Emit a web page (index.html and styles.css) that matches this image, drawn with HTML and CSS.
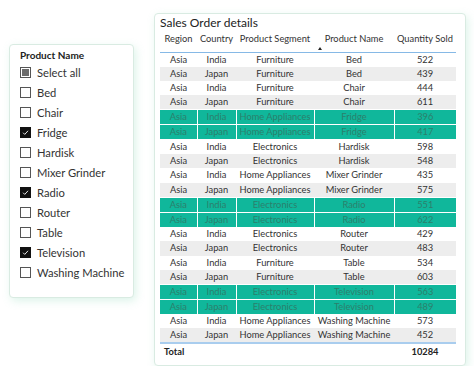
FILE: index.html
```html
<!DOCTYPE html>
<html>
<head>
<meta charset="utf-8">
<link rel="stylesheet" href="styles.css">
</head>
<body>
<div class="page">
  <div class="slicer">
    <div class="slicer-title">Product Name</div>
    <ul class="items">
      <li><span class="box partial"><span class="inner"></span></span>Select all</li>
      <li><span class="box"></span>Bed</li>
      <li><span class="box"></span>Chair</li>
      <li><span class="box checked"><svg viewBox="0 0 11 11" width="11" height="11"><path d="M2.6 5.8 L4.6 7.8 L8.6 3.4" fill="none" stroke="#fff" stroke-width="1.1"/></svg></span>Fridge</li>
      <li><span class="box"></span>Hardisk</li>
      <li><span class="box"></span>Mixer Grinder</li>
      <li><span class="box checked"><svg viewBox="0 0 11 11" width="11" height="11"><path d="M2.6 5.8 L4.6 7.8 L8.6 3.4" fill="none" stroke="#fff" stroke-width="1.1"/></svg></span>Radio</li>
      <li><span class="box"></span>Router</li>
      <li><span class="box"></span>Table</li>
      <li><span class="box checked"><svg viewBox="0 0 11 11" width="11" height="11"><path d="M2.6 5.8 L4.6 7.8 L8.6 3.4" fill="none" stroke="#fff" stroke-width="1.1"/></svg></span>Television</li>
      <li><span class="box"></span>Washing Machine</li>
    </ul>
  </div>

  <div class="card">
    <div class="card-title">Sales Order details</div>
    <table class="grid">
      <colgroup>
        <col class="c1"><col class="c2"><col class="c3"><col class="c4"><col class="c5">
      </colgroup>
      <thead>
        <tr>
          <th>Region</th><th>Country</th><th>Product Segment</th><th class="sorted">Product Name<span class="arrow"></span></th><th>Quantity Sold</th>
        </tr>
      </thead>
      <tbody>
        <tr><td>Asia</td><td>India</td><td>Furniture</td><td>Bed</td><td>522</td></tr>
        <tr class="alt"><td>Asia</td><td>Japan</td><td>Furniture</td><td>Bed</td><td>439</td></tr>
        <tr><td>Asia</td><td>India</td><td>Furniture</td><td>Chair</td><td>444</td></tr>
        <tr class="alt"><td>Asia</td><td>Japan</td><td>Furniture</td><td>Chair</td><td>611</td></tr>
        <tr class="sel"><td>Asia</td><td>India</td><td>Home Appliances</td><td>Fridge</td><td>396</td></tr>
        <tr class="sel"><td>Asia</td><td>Japan</td><td>Home Appliances</td><td>Fridge</td><td>417</td></tr>
        <tr><td>Asia</td><td>India</td><td>Electronics</td><td>Hardisk</td><td>598</td></tr>
        <tr class="alt"><td>Asia</td><td>Japan</td><td>Electronics</td><td>Hardisk</td><td>548</td></tr>
        <tr><td>Asia</td><td>India</td><td>Home Appliances</td><td>Mixer Grinder</td><td>435</td></tr>
        <tr class="alt"><td>Asia</td><td>Japan</td><td>Home Appliances</td><td>Mixer Grinder</td><td>575</td></tr>
        <tr class="sel"><td>Asia</td><td>India</td><td>Electronics</td><td>Radio</td><td>551</td></tr>
        <tr class="sel"><td>Asia</td><td>Japan</td><td>Electronics</td><td>Radio</td><td>622</td></tr>
        <tr><td>Asia</td><td>India</td><td>Electronics</td><td>Router</td><td>429</td></tr>
        <tr class="alt"><td>Asia</td><td>Japan</td><td>Electronics</td><td>Router</td><td>483</td></tr>
        <tr><td>Asia</td><td>India</td><td>Furniture</td><td>Table</td><td>534</td></tr>
        <tr class="alt"><td>Asia</td><td>Japan</td><td>Furniture</td><td>Table</td><td>603</td></tr>
        <tr class="sel"><td>Asia</td><td>India</td><td>Electronics</td><td>Television</td><td>563</td></tr>
        <tr class="sel"><td>Asia</td><td>Japan</td><td>Electronics</td><td>Television</td><td>489</td></tr>
        <tr><td>Asia</td><td>India</td><td>Home Appliances</td><td>Washing Machine</td><td>573</td></tr>
        <tr class="alt"><td>Asia</td><td>Japan</td><td>Home Appliances</td><td>Washing Machine</td><td>452</td></tr>
      </tbody>
      <tfoot>
        <tr><td class="total-label">Total</td><td></td><td></td><td></td><td>10284</td></tr>
      </tfoot>
    </table>
  </div>
</div>
</body>
</html>
```
FILE: styles.css
```css
* { box-sizing: border-box; }
html, body { margin: 0; padding: 0; background: #fff; }
body { font-family: "Lato", "Open Sans", sans-serif; color: #333; }

.page {
  display: flex;
  align-items: flex-start;
  padding: 13px 0 0 9px;
  gap: 20px;
}

.slicer {
  margin-top: 31px;
  width: 125px;
  height: 254px;
  background: #fff;
  border: 1px solid #d9ebe2;
  border-radius: 4px;
  box-shadow: 2px 3px 8px rgba(120, 210, 170, 0.25);
  padding: 3px 0 0 10px;
}
.slicer-title {
  font-size: 10px;
  font-weight: 700;
  color: #222;
  line-height: 14px;
  height: 14px;
}
.items { list-style: none; margin: 0; padding: 0; }
.items li {
  display: flex;
  align-items: center;
  height: 20px;
  font-size: 11.2px;
  color: #333;
  white-space: nowrap;
}
.box {
  width: 11px;
  height: 11px;
  border: 1px solid #555;
  margin-right: 6px;
  flex: none;
  display: flex;
  align-items: center;
  justify-content: center;
  background: #fff;
}
.box.checked { background: #111; border-color: #111; }
.box.checked svg { display: block; }
.box.partial .inner { width: 7px; height: 7px; background: #6b6b6b; }

.card {
  width: 312px;
  height: 353px;
  background: #fff;
  border: 1px solid #d9ebe2;
  border-radius: 4px;
  box-shadow: 2px 3px 8px rgba(120, 210, 170, 0.25);
  padding: 1px 8px 0 5px;
}
.card-title {
  font-size: 12px;
  color: #222;
  line-height: 16px;
  height: 16px;
}

.grid {
  border-collapse: collapse;
  table-layout: fixed;
  width: 296px;
  font-size: 9.3px;
}
.c1 { width: 37px; }
.c2 { width: 39px; }
.c3 { width: 78px; }
.c4 { width: 80px; }
.c5 { width: 62px; }

.grid th {
  font-weight: 400;
  color: #333;
  height: 21px;
  padding: 0 0 5px;
  text-align: center;
  white-space: nowrap;
  border-bottom: 1px solid #86b9e6;
  position: relative;
}
.grid th.sorted .arrow {
  position: absolute;
  left: 4px;
  bottom: 2px;
  width: 0;
  height: 0;
  border-left: 2.5px solid transparent;
  border-right: 2.5px solid transparent;
  border-bottom: 3px solid #222;
}
.grid td {
  height: 14.45px;
  padding: 0;
  text-align: center;
  white-space: nowrap;
  overflow: hidden;
  line-height: 14px;
  color: #333;
}
.grid tr.alt td { background: #ededed; }
.grid tr.sel td {
  background: #10b79b;
  color: #2c7f6c;
  border-left: 1px solid rgba(255,255,255,0.18);
  border-top: 1px solid rgba(255,255,255,0.25);
}
.grid tr.sel td:first-child { border-left: none; }

.grid tfoot td {
  border-top: 2px solid #a9cdee;
  font-weight: 700;
  color: #222;
  height: 16px;
  line-height: 15px;
}
.grid tfoot td.total-label { text-align: left; padding-left: 4px; }
```
